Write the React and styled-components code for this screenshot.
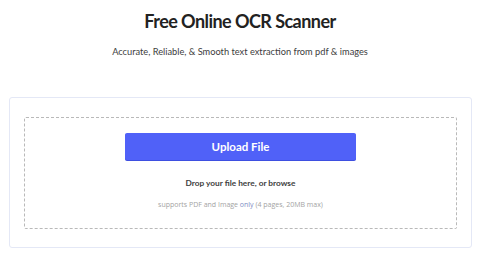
import React from 'react';
import styled, { createGlobalStyle } from 'styled-components';

const GlobalStyle = createGlobalStyle`
  html, body {
    margin: 0;
    padding: 0;
    background: #ffffff;
  }
  body {
    font-family: Lato, "Liberation Sans", sans-serif;
  }
`;

const Page = styled.div`
  width: 480px;
  height: 256px;
  overflow: hidden;
  display: flex;
  flex-direction: column;
`;

const Header = styled.header`
  display: flex;
  flex-direction: column;
  align-items: center;
  padding-top: 9px;
  height: 88px;
  box-sizing: border-box;
`;

const Title = styled.h1`
  margin: 0;
  font-family: Lato, sans-serif;
  font-size: 18px;
  font-weight: 700;
  letter-spacing: -0.55px;
  color: #222222;
  line-height: 24px;
`;

const Subtitle = styled.p`
  margin: 12px 0 0;
  font-family: Lato, sans-serif;
  font-size: 9.25px;
  color: #3d3d3d;
  line-height: 14px;
`;

const Card = styled.section`
  margin: 9px 8px 0 9px;
  height: 151px;
  box-sizing: border-box;
  border: 1px solid #e4e8f6;
  border-radius: 3px;
  padding: 19px 14px 0 14px;
`;

const DropZone = styled.div`
  height: 112px;
  box-sizing: border-box;
  border: 1px dashed #b9b9b9;
  border-radius: 2px;
  display: flex;
  flex-direction: column;
  align-items: center;
  padding-top: 15px;
`;

const UploadButton = styled.button`
  width: 231px;
  height: 27px;
  border: none;
  border-radius: 2px;
  background: #5061f8;
  box-shadow: 0 1px 0 #3e4fe0;
  color: #ffffff;
  font-family: Lato, sans-serif;
  font-size: 11.5px;
  font-weight: 700;
  cursor: pointer;
`;

const DropText = styled.p`
  margin: 18px 0 0;
  font-family: Lato, sans-serif;
  font-size: 8.3px;
  font-weight: 700;
  color: #3e3e3e;
`;

const Supports = styled.p`
  margin: 12px 0 0;
  font-family: "Open Sans", sans-serif;
  font-size: 7px;
  color: #a3a3a3;
`;

const Only = styled.span`
  color: #7f8fc4;
`;

export default function App() {
  return (
    <Page>
      <GlobalStyle />
      <Header>
        <Title>Free Online OCR Scanner</Title>
        <Subtitle>Accurate, Reliable, &amp; Smooth text extraction from pdf &amp; images</Subtitle>
      </Header>
      <Card>
        <DropZone>
          <UploadButton>Upload File</UploadButton>
          <DropText>Drop your file here, or browse</DropText>
          <Supports>
            supports PDF and Image <Only>only</Only> (4 pages, 20MB max)
          </Supports>
        </DropZone>
      </Card>
    </Page>
  );
}
